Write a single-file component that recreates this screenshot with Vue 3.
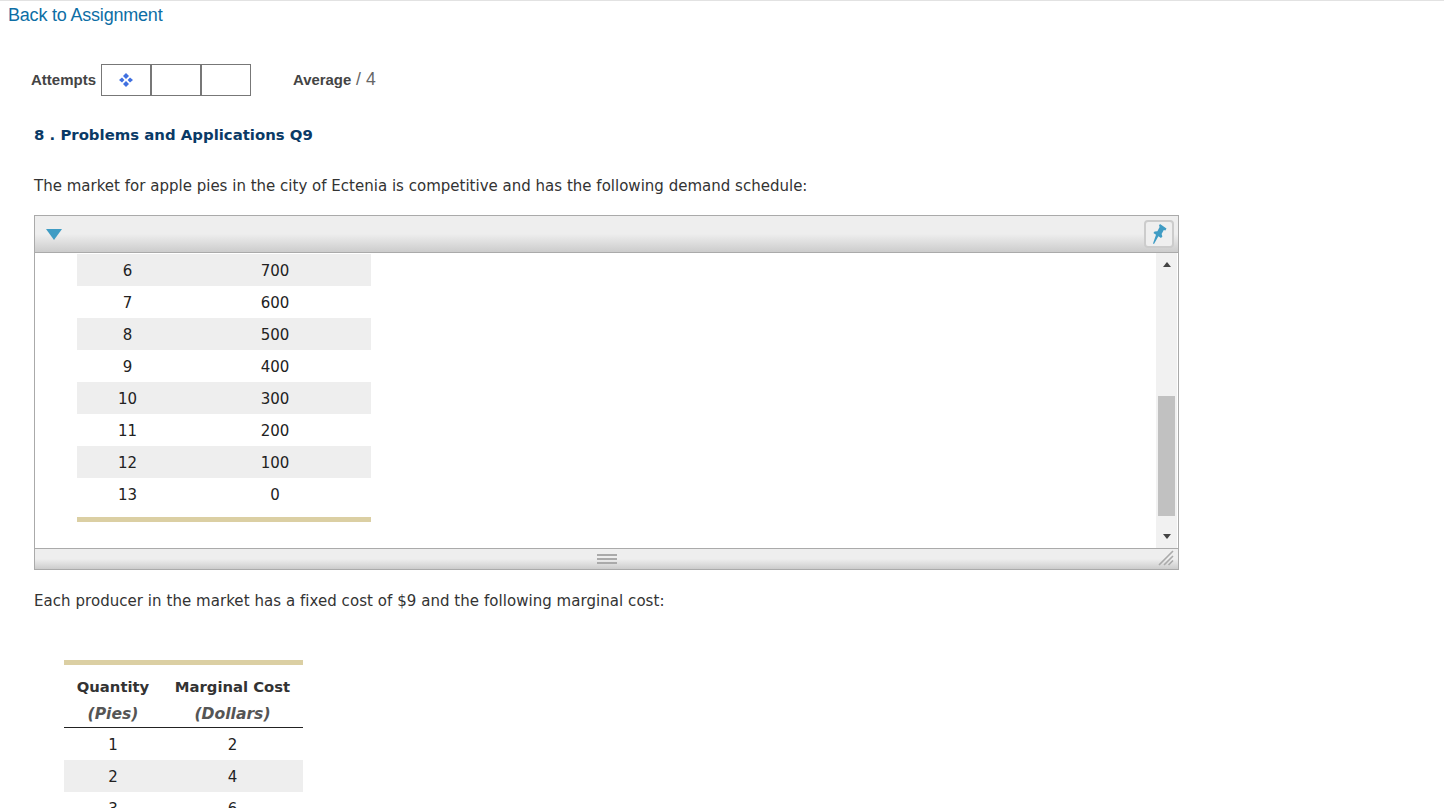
<script setup>
const demandRows = [
  { price: 6, qty: 700 },
  { price: 7, qty: 600 },
  { price: 8, qty: 500 },
  { price: 9, qty: 400 },
  { price: 10, qty: 300 },
  { price: 11, qty: 200 },
  { price: 12, qty: 100 },
  { price: 13, qty: 0 }
]

const costRows = [
  { qty: 1, cost: 2 },
  { qty: 2, cost: 4 },
  { qty: 3, cost: 6 }
]
</script>

<template>
  <div class="page">
    <a class="back-link">Back to Assignment</a>

    <div class="attempts-row">
      <span class="attempts-label">Attempts</span>
      <div class="attempts-boxes">
        <div class="attempt-box">
          <svg width="14" height="14" viewBox="0 0 14 14">
            <g fill="#4070e0">
              <path d="M7 0 10 3 7 6 4 3z" />
              <path d="M7 8 10 11 7 14 4 11z" />
              <path d="M0 7 3 4.6 5.4 7 3 9.4z" />
              <path d="M14 7 11 4.6 8.6 7 11 9.4z" />
            </g>
          </svg>
        </div>
        <div class="attempt-box"></div>
        <div class="attempt-box"></div>
      </div>
      <span class="average"><b>Average</b> / 4</span>
    </div>

    <h2 class="question-title">8 . Problems and Applications Q9</h2>

    <p class="intro">The market for apple pies in the city of Ectenia is competitive and has the following demand schedule:</p>

    <div class="panel">
      <div class="panel-head">
        <span class="triangle"></span>
        <button class="pin-btn">
          <svg width="20" height="24" viewBox="0 0 20 24">
            <path fill="#3f9cc4" d="M11 2 17.5 6.4 16.4 8.4 14.8 8 12.6 12 13.4 14.6 12 16 9.4 14.2 5 22 4 21.4 7 12.8 4.4 11 5.6 9.4 8.4 9.2 10.6 5 10 3.4z" />
          </svg>
        </button>
      </div>
      <div class="panel-body">
        <div class="panel-content">
          <div class="demand-table">
            <div v-for="row in demandRows" :key="row.price" class="demand-row">
              <span>{{ row.price }}</span>
              <span>{{ row.qty }}</span>
            </div>
            <div class="tan-bar demand-bar"></div>
          </div>
        </div>
        <div class="scrollbar">
          <span class="arrow arrow-up"></span>
          <div class="scroll-track">
            <div class="scroll-thumb"></div>
          </div>
          <span class="arrow arrow-down"></span>
        </div>
      </div>
      <div class="panel-foot">
        <span class="grip"></span>
        <svg class="resize" width="16" height="16" viewBox="0 0 16 16">
          <path d="M1 15 15 1M6 15 15 6M10.5 15 15 10.5" stroke="#aaa" stroke-width="1.6" fill="none" />
        </svg>
      </div>
    </div>

    <p class="cost-intro">Each producer in the market has a fixed cost of $9 and the following marginal cost:</p>

    <div class="cost-table">
      <div class="tan-bar"></div>
      <div class="cost-row cost-head">
        <span>Quantity</span>
        <span>Marginal Cost</span>
      </div>
      <div class="cost-row cost-units">
        <span>(Pies)</span>
        <span>(Dollars)</span>
      </div>
      <div v-for="row in costRows" :key="row.qty" class="cost-row cost-data">
        <span>{{ row.qty }}</span>
        <span>{{ row.cost }}</span>
      </div>
    </div>
  </div>
</template>

<style>
html,
body {
  margin: 0;
  height: 100%;
  overflow: hidden;
  background: #fff;
}
</style>

<style scoped>
.page {
  height: 808px;
  overflow: hidden;
  box-sizing: border-box;
  border-top: 1px solid #e2e2e2;
  font-family: "DejaVu Sans", Verdana, sans-serif;
  font-size: 15px;
  color: #333;
}

.back-link {
  display: block;
  margin-left: 8px;
  height: 28px;
  line-height: 28px;
  font-family: "Liberation Sans", Arial, sans-serif;
  font-size: 18px;
  letter-spacing: -0.2px;
  color: #0d6ea5;
}

.attempts-row {
  display: flex;
  align-items: center;
  margin: 35px 0 0 31px;
  height: 32px;
  font-family: "Liberation Sans", Arial, sans-serif;
}

.attempts-label {
  width: 70px;
  font-weight: 700;
  color: #444;
  font-size: 15px;
  line-height: 31px;
  align-self: flex-start;
}

.attempts-boxes {
  display: flex;
  height: 32px;
}

.attempt-box {
  width: 50px;
  box-sizing: border-box;
  display: flex;
  align-items: center;
  justify-content: center;
  border: 1px solid #777;
}

.average {
  margin: 0 0 2px 42px;
  font-size: 17.6px;
  color: #666;
}

.average b {
  font-size: 14.9px;
  color: #444;
}

.question-title {
  margin: 29px 0 0 34px;
  font-size: 14.9px;
  line-height: 20px;
  font-weight: 700;
  color: #0a3a66;
}

.intro {
  margin: 31px 0 0 34px;
  line-height: 20px;
  letter-spacing: 0.01px;
}

.panel {
  margin: 19px 0 0 34px;
  width: 1145px;
  height: 355px;
  box-sizing: border-box;
  border: 1px solid #aaa;
  display: flex;
  flex-direction: column;
}

.panel-head {
  height: 37px;
  box-sizing: border-box;
  flex: none;
  display: flex;
  align-items: center;
  justify-content: space-between;
  padding: 0 4px 0 11px;
  border-bottom: 1px solid #aaa;
  background: linear-gradient(#eee 0, #eee 50%, #ccc 100%);
}

.triangle {
  width: 0;
  height: 0;
  border-left: 8px solid transparent;
  border-right: 8px solid transparent;
  border-top: 11px solid #3f9cc4;
}

.pin-btn {
  width: 30px;
  height: 28px;
  padding: 0;
  display: flex;
  align-items: center;
  justify-content: center;
  background: #efefef;
  border: 2px solid #ccc;
  border-radius: 4px;
}

.panel-body {
  flex: 1;
  min-height: 0;
  display: flex;
}

.panel-content {
  flex: 1;
  padding: 1px 0 0 42px;
}

.demand-table {
  width: 294px;
}

.demand-row {
  display: grid;
  grid-template-columns: 101px 194px;
  height: 32px;
  line-height: 34px;
  text-align: center;
  color: #222;
}

.demand-row:nth-child(odd) {
  background: #eee;
}

.tan-bar {
  height: 5px;
  background: #dbcfa3;
}

.demand-bar {
  margin-top: 7px;
}

.scrollbar {
  width: 21px;
  margin-right: 1px;
  background: #f1f1f1;
  display: flex;
  flex-direction: column;
  align-items: center;
}

.arrow {
  width: 0;
  height: 0;
  border-left: 4.5px solid transparent;
  border-right: 4.5px solid transparent;
  flex: none;
}

.arrow-up {
  margin-top: 9px;
  border-bottom: 5px solid #444;
}

.arrow-down {
  margin-bottom: 9px;
  border-top: 5px solid #444;
}

.scroll-track {
  flex: 1;
  width: 100%;
  padding: 129px 2px 0;
  box-sizing: border-box;
}

.scroll-thumb {
  height: 120px;
  background: #c1c1c1;
}

.panel-foot {
  height: 21px;
  box-sizing: border-box;
  flex: none;
  position: relative;
  display: flex;
  align-items: center;
  justify-content: center;
  border-top: 1px solid #aaa;
  background: linear-gradient(#eee 0, #eee 50%, #ccc 100%);
}

.grip {
  width: 20px;
  height: 10px;
  background: repeating-linear-gradient(#aaa 0, #aaa 2px, transparent 2px, transparent 4px);
}

.resize {
  position: absolute;
  right: 4px;
  bottom: 3px;
}

.cost-intro {
  margin: 21px 0 0 34px;
  line-height: 20px;
  letter-spacing: 0.05px;
}

.cost-table {
  margin: 49px 0 0 64px;
  width: 239px;
}

.cost-row {
  display: grid;
  grid-template-columns: 98px 141px;
  text-align: center;
  height: 32px;
  line-height: 34px;
  color: #222;
}

.cost-head {
  height: 30px;
  line-height: 32px;
  margin-top: 6px;
  font-weight: 700;
  font-size: 14.8px;
  color: #333;
}

.cost-units {
  height: 26px;
  line-height: 27px;
  font-style: italic;
  font-weight: 700;
  font-size: 15.6px;
  color: #555;
  border-bottom: 1px solid #222;
}

.cost-data:nth-child(odd) {
  background: #eee;
}
</style>
